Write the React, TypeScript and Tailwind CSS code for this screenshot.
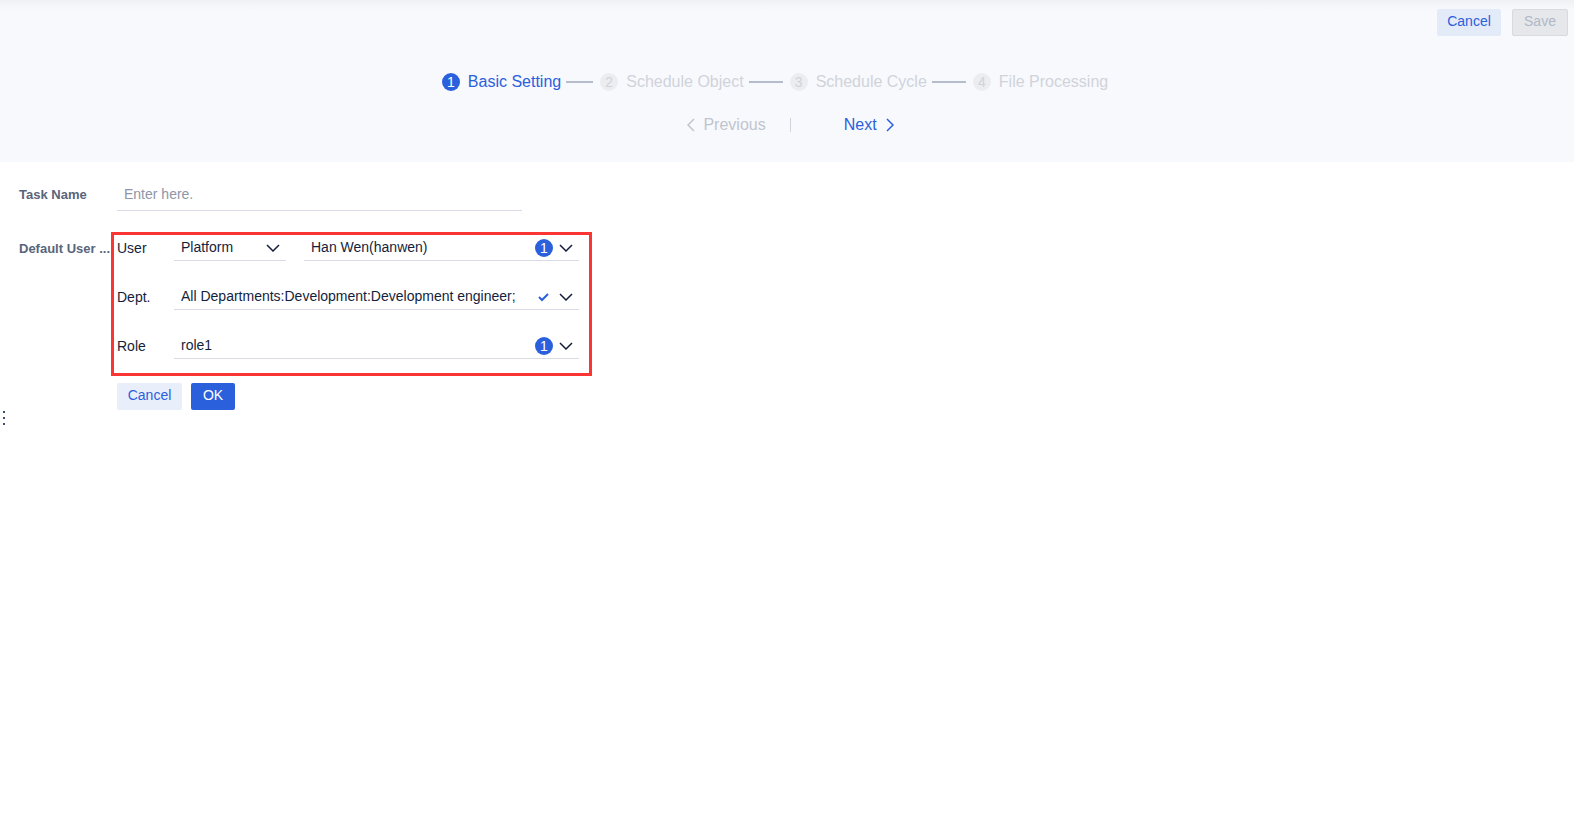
import React from 'react';

const steps = ['Basic Setting', 'Schedule Object', 'Schedule Cycle', 'File Processing'];

const Chevron = ({ className }: { className?: string }) => (
    <svg className={className} width="14" height="8" viewBox="0 0 14 8" fill="none" stroke="currentColor" strokeWidth="1.5">
        <path d="M1 1l6 6 6-6" />
    </svg>
);

const Badge = ({ children }: { children: React.ReactNode }) => (
    <span className="flex size-[18px] items-center justify-center rounded-full bg-[#2b60dc] text-sm leading-4 text-white">
        {children}
    </span>
);

type PickerProps = {
    label: string;
    value: string;
    className: string;
    mark?: React.ReactNode;
};

const Picker = ({ label, value, className, mark }: PickerProps) => (
    <div className={`relative h-[26px] border-b border-[#d9dbe6] ${className}`}>
        <select
            aria-label={label}
            defaultValue={value}
            className="block h-6 w-full appearance-none bg-transparent pr-12 pl-[7px] text-sm text-[#141e3c] outline-none"
        >
            <option>{value}</option>
        </select>
        <div className="pointer-events-none absolute top-0 right-1.5 flex h-[25px] items-center gap-1.5">
            {mark}
            <Chevron className="text-[#141e3c]" />
        </div>
    </div>
);

const Header = () => (
    <header className="bg-[#f8f9fd] bg-linear-to-b from-[#eff1f5] to-[#f8f9fd] to-[10px] pt-[9px] pb-[25px]">
        <div className="flex justify-end gap-[11px] pr-1.5 text-sm leading-5">
            <button className="h-[27px] w-16 rounded-xs bg-[#e3eaf8] pb-[3px] text-[#2b60dc]">Cancel</button>
            <button disabled className="h-[27px] w-14 rounded-xs border border-[#d8dade] bg-[#e6e7eb] pb-[3px] text-[#b0b8c6]">
                Save
            </button>
        </div>

        <ol className="mt-[34px] flex items-center justify-center pr-6 leading-6">
            {steps.map((step, idx) => (
                <li key={step} className="flex items-center">
                    {idx > 0 && (
                        <span className={`mr-[7px] ml-[5px] h-0.5 bg-[#b5bdcc] ${idx === 1 ? 'w-[27px]' : 'w-[34px]'}`}></span>
                    )}
                    <span
                        className={`mr-2 flex size-[18px] items-center justify-center rounded-full text-sm leading-4 ${
                            idx === 0 ? 'bg-[#2b60dc] text-white' : 'bg-[#ecedf1] text-[#d0d3da]'
                        }`}
                    >
                        {idx + 1}
                    </span>
                    <span className={idx === 0 ? 'text-[#2b60dc]' : 'text-[#d0d3da]'}>{step}</span>
                </li>
            ))}
        </ol>

        <div className="mt-[19px] flex items-center justify-center pl-1.5 leading-6">
            <button disabled className="flex items-center gap-2 text-[#c0c5ce]">
                <svg width="9" height="14" viewBox="0 0 9 14" fill="none" stroke="currentColor" strokeWidth="1.5">
                    <path d="M8 1L2 7l6 6" />
                </svg>
                Previous
            </button>
            <span className="mr-[53px] ml-6 h-3.5 w-px bg-[#d0d3da]"></span>
            <button className="flex items-center gap-2 text-[#2b60dc]">
                Next
                <svg width="9" height="14" viewBox="0 0 9 14" fill="none" stroke="currentColor" strokeWidth="1.5">
                    <path d="M2 1l6 6-6 6" />
                </svg>
            </button>
        </div>
    </header>
);

const App = () => (
    <div className="relative min-h-screen bg-white font-['Liberation_Sans',Arial,sans-serif] text-base text-[#141e3c]">
        <Header />

        {/* Panel drag handle */}
        <div className="absolute top-[411px] left-[3px] flex flex-col gap-1">
            <span className="size-0.5 bg-[#3b5070]"></span>
            <span className="size-0.5 bg-[#3b5070]"></span>
            <span className="size-0.5 bg-[#3b5070]"></span>
        </div>

        <main className="px-[19px] pt-4 text-sm">
            <div className="flex">
                <label htmlFor="task-name" className="w-[98px] shrink-0 pt-[7px] text-[13px] leading-5 font-bold text-[#58657b]">
                    Task Name
                </label>
                <input
                    id="task-name"
                    placeholder="Enter here."
                    className="h-[33px] w-full max-w-[405px] border-b border-[#d9dbe6] px-[7px] outline-none placeholder:text-[#8e96a8]"
                />
            </div>

            <div className="mt-[21px] flex">
                <span className="w-[92px] shrink-0 pt-[7px] text-[13px] leading-5 font-bold whitespace-nowrap text-[#58657b]">
                    Default User ...
                </span>
                <div className="w-full max-w-[481px]">
                    <div className="flex flex-col gap-[23px] border-3 border-[#fa3534] pr-2.5 pb-3.5 pl-[3px]">
                        <div className="flex items-center">
                            <span className="w-[57px] shrink-0">User</span>
                            <Picker label="User source" value="Platform" className="mr-[18px] w-28 shrink-0" />
                            <Picker label="User" value="Han Wen(hanwen)" className="flex-1" mark={<Badge>1</Badge>} />
                        </div>
                        <div className="flex items-center">
                            <span className="w-[57px] shrink-0">Dept.</span>
                            <Picker
                                label="Department"
                                value="All Departments:Development:Development engineer;"
                                className="flex-1"
                                mark={
                                    <svg width="18" height="12" viewBox="0 0 18 12" fill="none" stroke="#2b60dc" strokeWidth="2">
                                        <path d="M4 6l3 3 6-6" />
                                    </svg>
                                }
                            />
                        </div>
                        <div className="flex items-center">
                            <span className="w-[57px] shrink-0">Role</span>
                            <Picker label="Role" value="role1" className="flex-1" mark={<Badge>1</Badge>} />
                        </div>
                    </div>
                    <div className="mt-[7px] flex gap-[9px] pl-1.5">
                        <button className="h-[27px] w-[65px] rounded-xs bg-[#e9eefb] pb-[3px] text-[#2b60dc]">Cancel</button>
                        <button className="h-[27px] w-11 rounded-xs bg-[#2b60dc] pb-[3px] text-white">OK</button>
                    </div>
                </div>
            </div>
        </main>
    </div>
);

export default App;
